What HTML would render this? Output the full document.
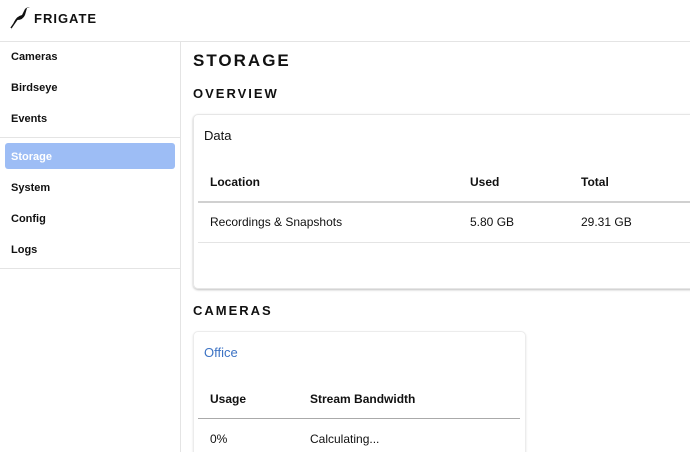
<!DOCTYPE html>
<html style="overflow:hidden;height:452px"><head><style>
*{margin:0;padding:0;box-sizing:border-box}
body{width:690px;height:452px;overflow:hidden;background:#fff;font-family:"Liberation Sans","DejaVu Sans",sans-serif;color:#111;position:relative}
.a{position:absolute;white-space:nowrap}
.nav{font-size:11px;font-weight:bold;left:11px}
.h{font-weight:bold;letter-spacing:2px}
.th{font-size:12px;font-weight:bold}
.td{font-size:12px}
</style></head><body>
<svg class="a" style="left:9px;top:6px" width="24" height="26" viewBox="0 0 24 26"><path d="M2 24 L5 16 Q8 10 13 9 L16 3 Q18 1 21 1 L18 2 L16 9 Q14 14 8 14 Q5 17 2 24 Z" fill="#111"/><path d="M2 22 L9 12" stroke="#111" stroke-width="1.5"/></svg>
<div class="a h" style="left:34px;top:11px;font-size:13px;letter-spacing:1px">FRIGATE</div>
<div class="a" style="left:0;top:41px;width:690px;height:1px;background:#e4e4e4"></div>
<div class="a" style="left:180px;top:42px;width:1px;height:410px;background:#e4e4e4"></div>
<div class="a nav" style="top:51px">Cameras</div>
<div class="a nav" style="top:82px">Birdseye</div>
<div class="a nav" style="top:113px">Events</div>
<div class="a" style="left:0;top:137px;width:180px;height:1px;background:#e4e4e4"></div>
<div class="a" style="left:5px;top:143px;width:170px;height:26px;background:#9dbdf5;border-radius:3px"></div>
<div class="a nav" style="top:151px;color:#fff">Storage</div>
<div class="a nav" style="top:182px">System</div>
<div class="a nav" style="top:213px">Config</div>
<div class="a nav" style="top:244px">Logs</div>
<div class="a" style="left:0;top:268px;width:180px;height:1px;background:#e4e4e4"></div>

<div class="a h" style="left:193px;top:51px;font-size:17px">STORAGE</div>
<div class="a h" style="left:193px;top:86px;font-size:13px">OVERVIEW</div>
<div class="a" style="left:193px;top:114px;width:510px;height:175px;border:1px solid #e6e6e6;border-radius:5px;box-shadow:0 1px 2px rgba(0,0,0,.25)"></div>
<div class="a" style="left:204px;top:128px;font-size:13px">Data</div>
<div class="a th" style="left:210px;top:175px">Location</div>
<div class="a th" style="left:470px;top:175px">Used</div>
<div class="a th" style="left:581px;top:175px">Total</div>
<div class="a" style="left:198px;top:201px;width:492px;height:2px;background:#d0d0d0"></div>
<div class="a td" style="left:210px;top:215px">Recordings &amp; Snapshots</div>
<div class="a td" style="left:470px;top:215px">5.80 GB</div>
<div class="a td" style="left:581px;top:215px">29.31 GB</div>
<div class="a" style="left:198px;top:242px;width:492px;height:1px;background:#e4e4e4"></div>

<div class="a h" style="left:193px;top:303px;font-size:13px">CAMERAS</div>
<div class="a" style="left:193px;top:331px;width:333px;height:140px;border:1px solid #ececec;border-radius:5px;box-shadow:0 1px 2px rgba(0,0,0,.12)"></div>
<div class="a" style="left:204px;top:345px;font-size:13px;color:#3d73c4">Office</div>
<div class="a th" style="left:210px;top:392px">Usage</div>
<div class="a th" style="left:310px;top:392px">Stream Bandwidth</div>
<div class="a" style="left:198px;top:418px;width:322px;height:1px;background:#aaa"></div>
<div class="a td" style="left:210px;top:432px">0%</div>
<div class="a td" style="left:310px;top:432px">Calculating...</div>
</body></html>
